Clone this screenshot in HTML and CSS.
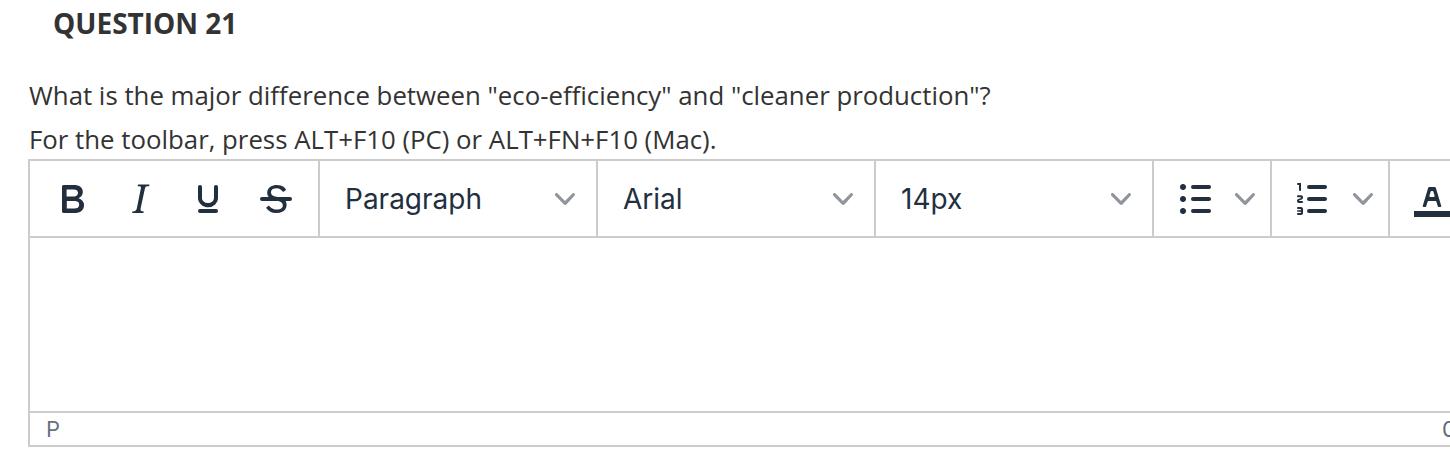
FILE: index.html
```html
<!DOCTYPE html>
<html lang="en">
<head>
<meta charset="utf-8">
<title>Question 21</title>
<link rel="stylesheet" href="styles.css">
</head>
<body>
<div class="page">
  <h2 class="title">QUESTION 21</h2>
  <div class="prompt">
    <div class="line">What is the major difference between "eco-efficiency" and "cleaner production"?</div>
    <div class="line">For the toolbar, press ALT+F10 (PC) or ALT+FN+F10 (Mac).</div>
  </div>
  <div class="editor">
    <div class="toolbar">
      <div class="group fmt">
        <span class="btn"><svg width="48" height="48" viewBox="0 0 24 24"><path d="M7.8 19c-.3 0-.5 0-.6-.2l-.2-.5V5.7c0-.2 0-.4.2-.5l.6-.2h5c1.5 0 2.7.3 3.5 1 .7.6 1.1 1.4 1.1 2.5a3 3 0 01-.6 1.9c-.4.6-1 1-1.6 1.2.4.1.9.3 1.3.6s.8.7 1 1.2c.4.4.5 1 .5 1.6 0 1.3-.4 2.3-1.3 3-.8.7-2.1 1-3.8 1H7.8zm5-8.3c.6 0 1.2-.1 1.6-.5.4-.3.6-.7.6-1.3 0-1.1-.8-1.7-2.3-1.7H9.3v3.5h3.4zm.5 6c.7 0 1.3-.1 1.7-.4.4-.4.6-.9.6-1.5s-.2-1-.7-1.4c-.4-.3-1-.4-2-.4H9.4v3.8h4z" fill-rule="evenodd"/></svg></span>
        <span class="btn"><svg width="48" height="48" viewBox="0 0 24 24"><path d="M16.7 4.7l-.1.9h-.3c-.6 0-1 0-1.4.3-.3.3-.4.6-.5 1.1l-2.1 9.8v.6c0 .5.4.8 1.4.8h.2l-.2.8H8l.2-.8h.2c1.1 0 1.8-.5 2-1.5l2-9.8.1-.5c0-.6-.4-.8-1.4-.8h-.3l.2-.9h5.8z" fill-rule="evenodd"/></svg></span>
        <span class="btn"><svg width="48" height="48" viewBox="0 0 24 24"><path d="M16 5c.6 0 1 .4 1 1v5.5a4 4 0 01-.4 1.8l-1 1.4a5.3 5.3 0 01-5.5 1 5 5 0 01-1.6-1c-.5-.4-.8-.9-1.1-1.4a4 4 0 01-.4-1.8V6c0-.6.4-1 1-1s1 .4 1 1v5.5c0 .3 0 .6.2 1l.6.7a3.3 3.3 0 002.2.8 3.4 3.4 0 002.2-.8c.3-.2.4-.5.6-.8l.2-.9V6c0-.6.4-1 1-1zM8 17h8c.6 0 1 .4 1 1s-.4 1-1 1H8a1 1 0 010-2z" fill-rule="evenodd"/></svg></span>
        <span class="btn"><svg width="48" height="48" viewBox="0 0 24 24"><g fill-rule="evenodd"><path d="M15.6 8.5c-.5-.7-1-1.1-1.3-1.3-.6-.4-1.3-.6-2-.6-2.7 0-2.8 1.7-2.8 2.1 0 1.6 1.8 2 3.2 2.3 4.4.9 4.6 2.8 4.6 3.9 0 1.4-.7 4.1-5 4.1A6.2 6.2 0 017 16.4l1.5-1.1c.4.6 1.6 2 3.7 2 1.6 0 2.5-.4 3-1.2.4-.8.3-2-.8-2.6-.7-.4-1.6-.7-2.9-1-1-.2-3.9-.8-3.9-3.6C7.6 6 10.3 5 12.4 5c2.9 0 4.2 1.6 4.7 2.4l-1.5 1.1z"/><path d="M5 11h14a1 1 0 010 2H5a1 1 0 010-2z" fill-rule="nonzero"/></g></svg></span>
      </div>
      <div class="group select"><span class="label">Paragraph</span><svg class="chev" width="20" height="20" viewBox="0 0 10 10"><path d="M8.7 2.2c.3-.3.8-.3 1 0 .4.4.4.9 0 1.2L5.7 7.8c-.3.3-.9.3-1.2 0L.2 3.4a.8.8 0 010-1.2c.3-.3.8-.3 1.1 0L5 6l3.7-3.8z"/></svg></div>
      <div class="group select"><span class="label">Arial</span><svg class="chev" width="20" height="20" viewBox="0 0 10 10"><path d="M8.7 2.2c.3-.3.8-.3 1 0 .4.4.4.9 0 1.2L5.7 7.8c-.3.3-.9.3-1.2 0L.2 3.4a.8.8 0 010-1.2c.3-.3.8-.3 1.1 0L5 6l3.7-3.8z"/></svg></div>
      <div class="group select"><span class="label">14px</span><svg class="chev" width="20" height="20" viewBox="0 0 10 10"><path d="M8.7 2.2c.3-.3.8-.3 1 0 .4.4.4.9 0 1.2L5.7 7.8c-.3.3-.9.3-1.2 0L.2 3.4a.8.8 0 010-1.2c.3-.3.8-.3 1.1 0L5 6l3.7-3.8z"/></svg></div>
      <div class="group split">
        <svg width="48" height="48" viewBox="0 0 24 24"><path d="M11 5h8c.6 0 1 .4 1 1s-.4 1-1 1h-8a1 1 0 010-2zm0 6h8c.6 0 1 .4 1 1s-.4 1-1 1h-8a1 1 0 010-2zm0 6h8c.6 0 1 .4 1 1s-.4 1-1 1h-8a1 1 0 010-2zM4.5 6c0-.4.1-.8.4-1 .3-.4.7-.5 1.1-.5.4 0 .8.1 1 .4.4.3.5.7.5 1.1 0 .4-.1.8-.4 1-.3.4-.7.5-1.1.5-.4 0-.8-.1-1-.4-.4-.3-.5-.7-.5-1.1zm0 6c0-.4.1-.8.4-1 .3-.4.7-.5 1.1-.5.4 0 .8.1 1 .4.4.3.5.7.5 1.1 0 .4-.1.8-.4 1-.3.4-.7.5-1.1.5-.4 0-.8-.1-1-.4-.4-.3-.5-.7-.5-1.1zm0 6c0-.4.1-.8.4-1 .3-.4.7-.5 1.1-.5.4 0 .8.1 1 .4.4.3.5.7.5 1.1 0 .4-.1.8-.4 1-.3.4-.7.5-1.1.5-.4 0-.8-.1-1-.4-.4-.3-.5-.7-.5-1.1z" fill-rule="evenodd"/></svg>
        <svg class="chev" width="20" height="20" viewBox="0 0 10 10"><path d="M8.7 2.2c.3-.3.8-.3 1 0 .4.4.4.9 0 1.2L5.7 7.8c-.3.3-.9.3-1.2 0L.2 3.4a.8.8 0 010-1.2c.3-.3.8-.3 1.1 0L5 6l3.7-3.8z"/></svg>
      </div>
      <div class="group split">
        <svg width="48" height="48" viewBox="0 0 24 24"><path d="M10 17h8c.6 0 1 .4 1 1s-.4 1-1 1h-8a1 1 0 010-2zm0-6h8c.6 0 1 .4 1 1s-.4 1-1 1h-8a1 1 0 010-2zm0-6h8c.6 0 1 .4 1 1s-.4 1-1 1h-8a1 1 0 110-2zM6 4v3.5c0 .3-.2.5-.5.5a.5.5 0 01-.5-.5V5h-.5a.5.5 0 010-1H6zm-1 8.8l.2.2h1.3c.3 0 .5.2.5.5s-.2.5-.5.5H4.9a1 1 0 01-.9-1V13c0-.4.3-.8.6-1l1.2-.4.2-.3a.2.2 0 00-.2-.2H4.5a.5.5 0 01-.5-.5c0-.3.2-.5.5-.5h1.6c.5 0 .9.4.9 1v.1c0 .4-.3.8-.6 1l-1.2.4-.2.3zM7 17v2c0 .6-.4 1-1 1H4.5a.5.5 0 010-1h1.2c.2 0 .3-.1.3-.3 0-.2-.1-.3-.3-.3H4.4a.4.4 0 110-.8h1.3c.2 0 .3-.1.3-.3 0-.2-.1-.3-.3-.3H4.5a.5.5 0 110-1H6c.6 0 1 .4 1 1z" fill-rule="evenodd"/></svg>
        <svg class="chev" width="20" height="20" viewBox="0 0 10 10"><path d="M8.7 2.2c.3-.3.8-.3 1 0 .4.4.4.9 0 1.2L5.7 7.8c-.3.3-.9.3-1.2 0L.2 3.4a.8.8 0 010-1.2c.3-.3.8-.3 1.1 0L5 6l3.7-3.8z"/></svg>
      </div>
      <div class="group color">
        <svg width="48" height="48" viewBox="0 0 24 24"><g fill-rule="evenodd"><path d="M3 18h18v3H3z"/><path d="M8.7 16h-.8a.5.5 0 01-.5-.6l2.7-9c.1-.3.3-.4.5-.4h2.8c.2 0 .4.1.5.4l2.7 9a.5.5 0 01-.5.6h-.8a.5.5 0 01-.4-.4l-.7-2.2c0-.3-.3-.4-.5-.4h-3.4c-.2 0-.4.1-.5.4l-.7 2.2c0 .3-.2.4-.4.4zm2.6-7.6l-.6 2a.5.5 0 00.5.6h1.6a.5.5 0 00.5-.6l-.6-2c0-.3-.3-.4-.5-.4h-.4c-.2 0-.4.1-.5.4z"/></g></svg>
      </div>
    </div>
    <div class="content"></div>
    <div class="status">
      <span class="path">P</span>
      <span class="count">0 WORDS</span>
    </div>
  </div>
</div>
</body>
</html>
```

FILE: styles.css
```css
html, body {
  margin: 0;
  padding: 0;
  overflow: hidden;
  background: #fff;
}

.page {
  width: 1450px;
  height: 476px;
  overflow: hidden;
  font-family: "Open Sans", "Liberation Sans", sans-serif;
  color: #333;
}

.title {
  margin: 4px 0 0 53px;
  font-size: 28px;
  line-height: 38px;
  font-weight: 700;
  color: #333;
}

.prompt {
  margin: 31px 0 0 29px;
  font-size: 25.8px;
  line-height: 44px;
  color: #333;
  white-space: nowrap;
}

.editor {
  margin: -2px 0 0 28px;
  width: 1800px;
  border: 2px solid #ccc;
  box-sizing: border-box;
  font-family: Inter, "Noto Sans", sans-serif;
  color: #222f3e;
}

.toolbar {
  display: flex;
  height: 75px;
  border-bottom: 2px solid #ccc;
}

.group {
  display: flex;
  flex-shrink: 0;
  align-items: center;
  border-right: 2px solid #ccc;
  box-sizing: border-box;
  fill: #222f3e;
}

.fmt {
  width: 290px;
  padding: 0 8px;
}

.btn {
  width: 68px;
  height: 48px;
  display: flex;
  justify-content: center;
  align-items: center;
}

.select {
  width: 278px;
  padding: 0 21px 0 25px;
  justify-content: space-between;
  font-size: 28px;
}

.chev {
  fill: #8f959c;
}

.split {
  width: 118px;
  padding: 0 15px 0 17px;
  justify-content: space-between;
}

.color {
  padding-left: 18px;
  border-right: none;
}

.content {
  height: 173px;
}

.status {
  height: 32px;
  border-top: 2px solid #ccc;
  display: flex;
  align-items: center;
  font-size: 22px;
  color: rgba(34, 47, 62, 0.7);
  padding-left: 16px;
}

.count {
  margin-left: 1382px;
  color: #5b6b80;
}
```
